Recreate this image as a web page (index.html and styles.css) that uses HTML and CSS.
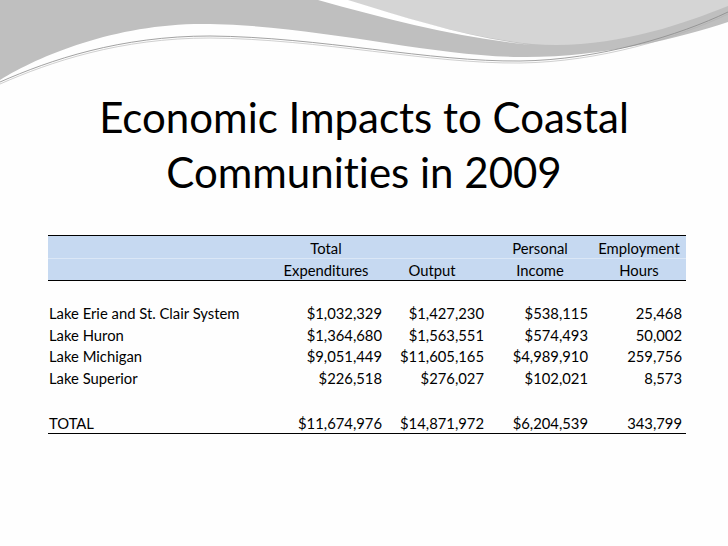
FILE: index.html
```html
<!DOCTYPE html>
<html>
<head>
<meta charset="utf-8">
<link rel="stylesheet" href="styles.css">
</head>
<body>
<div class="slide">
  <svg class="wave" width="728" height="90" viewBox="0 0 728 90">
    <path class="dark" d="M0,80 C40,55 120,22 210,24 C320,26 430,56 520,57 C600,58 680,38 728,22 V0 H0 Z"/>
    <path class="light" d="M346,0 C405,18 465,37 532,44 C610,50 680,25 728,6 V0 Z"/>
    <path class="white" d="M318,0 H348 C410,19 470,38 532,45 C460,38 390,20 318,0 Z"/>
    <path class="line" d="M0,82 C50,60 120,36 210,36 C320,37 430,62 520,61 C600,60 680,35 728,12"/>
    <path class="line2" d="M0,84 C50,62 120,38 210,38 C320,39 430,64 520,63 C600,62 680,37 728,14"/>
  </svg>
  <h1 class="title">Economic Impacts to Coastal<br>Communities in 2009</h1>
  <table class="data">
    <colgroup>
      <col class="c1"><col class="c2"><col class="c3"><col class="c4"><col class="c5">
    </colgroup>
    <thead>
      <tr class="hr1"><th></th><th>Total</th><th></th><th class="pi">Personal</th><th>Employment</th></tr>
      <tr class="hr2"><th></th><th>Expenditures</th><th class="out">Output</th><th>Income</th><th>Hours</th></tr>
    </thead>
    <tbody>
      <tr class="blank b1"><td colspan="5"></td></tr>
      <tr><td>Lake Erie and St. Clair System</td><td>$1,032,329</td><td>$1,427,230</td><td>$538,115</td><td>25,468</td></tr>
      <tr><td>Lake Huron</td><td>$1,364,680</td><td>$1,563,551</td><td>$574,493</td><td>50,002</td></tr>
      <tr><td>Lake Michigan</td><td>$9,051,449</td><td>$11,605,165</td><td>$4,989,910</td><td>259,756</td></tr>
      <tr><td>Lake Superior</td><td>$226,518</td><td>$276,027</td><td>$102,021</td><td>8,573</td></tr>
      <tr class="blank b2"><td colspan="5"></td></tr>
      <tr class="total"><td>TOTAL</td><td>$11,674,976</td><td>$14,871,972</td><td>$6,204,539</td><td>343,799</td></tr>
    </tbody>
  </table>
</div>
</body>
</html>
```
FILE: styles.css
```css
html, body {
  margin: 0;
  padding: 0;
  background: #fefefe;
}
.slide {
  width: 728px;
  height: 546px;
  overflow: hidden;
  font-family: Lato, "Open Sans", sans-serif;
  font-variant-ligatures: none;
  color: #000;
}
.wave {
  display: block;
}
.wave .dark { fill: #bfbfbf; }
.wave .light { fill: #d5d5d5; }
.wave .white { fill: #ffffff; }
.wave .line { fill: none; stroke: #8a8a8a; stroke-width: 0.8; }
.wave .line2 { fill: none; stroke: #b0b0b0; stroke-width: 0.6; }

.title {
  margin: 0;
  font-weight: 400;
  font-size: 42px;
  line-height: 55px;
  text-align: center;
}
.data {
  margin: 35px 0 0 48px;
  width: 638px;
  border-collapse: collapse;
  table-layout: fixed;
  font-size: 14.8px;
}
.c1 { width: 218px; }
.c2 { width: 120px; }
.c3 { width: 102px; }
.c4 { width: 104px; }
.c5 { width: 94px; }
.data td {
  padding: 0 4px 0 1px;
  height: 21.6px;
  line-height: 21.6px;
  white-space: nowrap;
}
.data thead tr { background: #c6d9f1; }
.data thead th {
  font-weight: 400;
  text-align: center;
  white-space: nowrap;
  height: auto;
  line-height: 19px;
}
.data .hr1 th {
  padding: 3px 0 0;
  border-top: 1.5px solid #000;
  border-bottom: 1px solid #dbe7f6;
}
.data .hr2 th {
  padding: 2px 0 0;
  border-bottom: 1.5px solid #000;
}
.data th.out { padding-right: 10px; }
.data td { text-align: right; }
.data td:first-child { text-align: left; }
.data .b1 td { height: 22px; }
.data .b2 td { height: 23.5px; }
.data .total td {
  height: 20px;
  line-height: 20px;
  border-bottom: 1.5px solid #000;
}
```
